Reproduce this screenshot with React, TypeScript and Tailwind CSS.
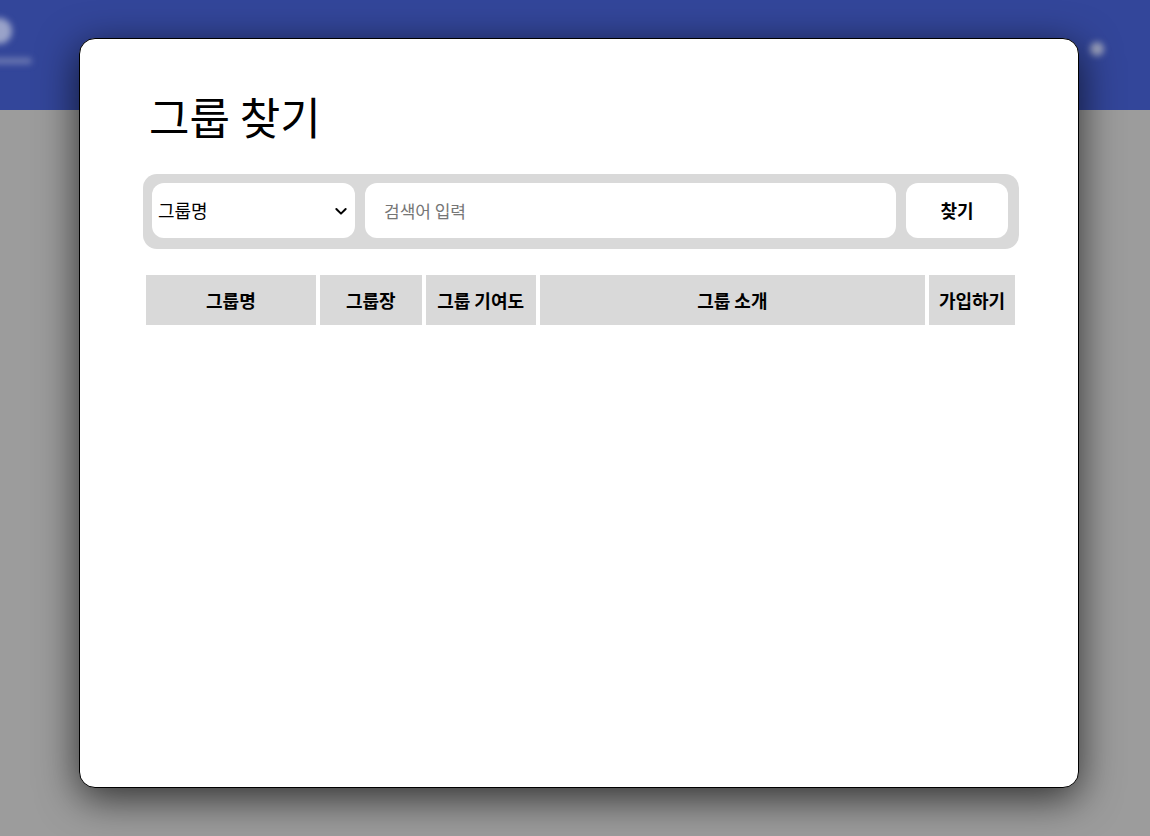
import React, { useState } from 'react';

const FONT = '"Noto Sans CJK KR", "Noto Sans", sans-serif';

const COLUMNS = [
  { label: '그룹명', width: 'w-[170px]' },
  { label: '그룹장', width: 'w-[102px]' },
  { label: '그룹 기여도', width: 'w-[110px]' },
  { label: '그룹 소개', width: 'w-[386px]' },
  { label: '가입하기', width: 'w-[86px]' },
];

const ChevronDown: React.FC = () => (
  <svg className="w-[16px] h-[16px]" viewBox="0 0 24 24" fill="none" stroke="currentColor" strokeWidth={3} strokeLinecap="round" strokeLinejoin="round">
    <path d="M5 9l7 7 7-7" />
  </svg>
);

export default function App() {
  const [field, setField] = useState('name');
  const [keyword, setKeyword] = useState('');

  return (
    <div className="relative w-[1150px] h-[836px] overflow-hidden bg-[#9c9c9c]" style={{ fontFamily: FONT }}>
      {/* dimmed page header behind the modal */}
      <div className="h-[110px] bg-[#33469a] flex items-start justify-between">
        <div className="blur-[3px] pt-[18px] -ml-[14px] flex flex-col gap-[14px]">
          <div className="w-[26px] h-[26px] rounded-full bg-[#9aa3c9]" />
          <div className="w-[40px] h-[6px] rounded bg-[#6f7bb3] ml-[6px]" />
        </div>
        <div className="blur-[3px] mt-[42px] mr-[46px] w-[14px] h-[14px] rounded-full bg-[#9aa0bd]" />
      </div>

      {/* modal */}
      <div className="absolute left-[79px] top-[38px] w-[1000px] h-[750px] bg-white border border-black rounded-[16px] shadow-[0_10px_40px_rgba(0,0,0,0.7)] pl-[63px] pr-[59px] pt-[49px]">
        <h1 className="text-[44px] leading-[56px] font-normal text-black pl-[6px]">그룹 찾기</h1>

        <div className="mt-[30px] h-[75px] bg-[#d9d9d9] rounded-[14px] pl-[9px] pt-[9px] pr-[11px] pb-[11px] flex gap-[10px]">
          <div className="relative w-[203px] h-full bg-white rounded-[12px]">
            <select
              value={field}
              onChange={(e) => setField(e.target.value)}
              className="w-full h-full appearance-none bg-transparent pl-[6px] text-[18px] text-black outline-none"
            >
              <option value="name">그룹명</option>
              <option value="leader">그룹장</option>
            </select>
            <div className="absolute right-[6px] top-1/2 -translate-y-1/2 pointer-events-none text-black">
              <ChevronDown />
            </div>
          </div>
          <input
            value={keyword}
            onChange={(e) => setKeyword(e.target.value)}
            placeholder="검색어 입력"
            className="flex-1 h-full bg-white rounded-[12px] px-[19px] text-[17px] text-black placeholder:text-[#767676] outline-none"
          />
          <button className="w-[102px] h-full bg-white rounded-[12px] text-[18px] font-bold text-black">찾기</button>
        </div>

        <table className="mt-[22px] -ml-[1px] border-separate border-spacing-[4px]">
          <thead>
            <tr>
              {COLUMNS.map((col) => (
                <th key={col.label} className={`${col.width} h-[50px] bg-[#d9d9d9] text-[18px] font-bold text-black p-0`}>
                  {col.label}
                </th>
              ))}
            </tr>
          </thead>
          <tbody />
        </table>
      </div>
    </div>
  );
}
